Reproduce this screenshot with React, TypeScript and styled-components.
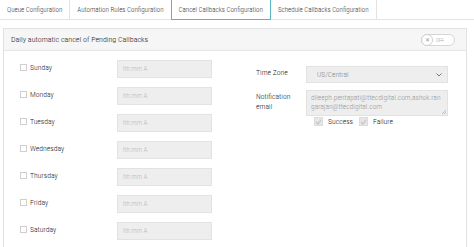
import React from "react";
import styled, { createGlobalStyle } from "styled-components";

const Global = createGlobalStyle`
  html, body { margin: 0; padding: 0; background: #fff; }
  body { font-family: "Roboto Condensed", "Liberation Sans", Arial, sans-serif; font-weight: 300; color: #333; }
  * { box-sizing: border-box; }
`;

const Page = styled.div`
  width: 474px;
  height: 247px;
  overflow: hidden;
`;

const TabBar = styled.div`
  display: flex;
  height: 20px;
  border-bottom: 1px solid #e3e3e3;
`;

const Tab = styled.div<{ $active?: boolean }>`
  display: flex;
  align-items: center;
  padding: 0 7px;
  height: 20px;
  font-size: 7px;
  color: #3a3a3a;
  white-space: nowrap;
  border-right: 1px solid #e3e3e3;
  border: ${(p) => (p.$active ? "1px solid #57b7c6" : undefined)};
  border-top: ${(p) => (p.$active ? "none" : undefined)};
  margin-left: ${(p) => (p.$active ? "-1px" : "0")};
`;

const Panel = styled.div`
  margin: 8px 7px 0 3px;
  border: 1px solid #e2e2e2;
  height: 230px;
`;

const PanelHeader = styled.div`
  display: flex;
  align-items: center;
  justify-content: space-between;
  height: 22px;
  padding: 0 11px 0 7px;
  background: #f6f6f6;
  border-bottom: 1px solid #e6e6e6;
  font-size: 8px;
  color: #222;
`;

const Toggle = styled.div`
  position: relative;
  width: 34px;
  height: 12px;
  border: 1px solid #d6d6d6;
  border-radius: 7px;
  background: #fff;
  display: flex;
  align-items: center;
  font-size: 5px;
  color: #999;
  padding-left: 14px;
`;

const Knob = styled.div`
  position: absolute;
  left: -1px;
  top: -1px;
  width: 12px;
  height: 12px;
  border-radius: 50%;
  border: 1px solid #cfcfcf;
  background: #fff;
  display: flex;
  align-items: center;
  justify-content: center;
  font-size: 6px;
  color: #999;
`;

const Body = styled.div`
  display: flex;
  padding: 9px 0 0 16px;
`;

const DaysColumn = styled.div`
  display: flex;
  flex-direction: column;
  gap: 9px;
  width: 236px;
`;

const DayRow = styled.div`
  display: flex;
  align-items: center;
  height: 18px;
`;

const DayLabel = styled.label`
  display: flex;
  align-items: center;
  gap: 3px;
  width: 97px;
  font-size: 7.7px;
  color: #222;
  margin-top: -4px;
`;

const Box = styled.span`
  width: 7px;
  height: 7px;
  border: 1px solid #cfcfcf;
  background: #fff;
  display: inline-block;
`;

const TimeInput = styled.div`
  width: 95px;
  height: 18px;
  background: #eeeeee;
  border: 1px solid #e2e2e2;
  display: flex;
  align-items: center;
  padding-left: 5px;
  font-size: 7px;
  color: #b8b8b8;
`;

const SettingsColumn = styled.div`
  display: grid;
  grid-template-columns: 50px 142px;
  row-gap: 7px;
  padding-top: 6px;
  align-content: start;
`;

const FieldLabel = styled.div`
  font-size: 7.7px;
  color: #222;
  line-height: 10px;
  padding-top: 2px;
`;

const Select = styled.div`
  height: 17px;
  background: #eeeeee;
  border: 1px solid #e2e2e2;
  display: flex;
  align-items: center;
  justify-content: space-between;
  padding: 0 5px 0 10px;
  font-size: 7.5px;
  color: #888;
`;

const Chevron = styled.svg`
  width: 6px;
  height: 4px;
`;

const TextArea = styled.div`
  position: relative;
  height: 26px;
  background: #eeeeee;
  border: 1px solid #e2e2e2;
  padding: 2px 4px;
  font-size: 7.5px;
  line-height: 9px;
  color: #999;
  word-break: break-all;
`;

const Grip = styled.svg`
  position: absolute;
  right: 1px;
  bottom: 1px;
  width: 5px;
  height: 5px;
`;

const ChecksRow = styled.div`
  grid-column: 2;
  display: flex;
  align-items: center;
  gap: 5px;
  margin-top: -6px;
  padding-left: 8px;
  font-size: 7.7px;
  color: #222;
`;

const CheckedBox = styled.span`
  width: 9px;
  height: 9px;
  background: #e6e6e6;
  border: 1px solid #dcdcdc;
  display: inline-flex;
  align-items: center;
  justify-content: center;
`;

const CheckItem = styled.span`
  display: flex;
  align-items: center;
  gap: 5px;
  margin-right: 1px;
`;

const days = ["Sunday", "Monday", "Tuesday", "Wednesday", "Thursday", "Friday", "Saturday"];

const Tick = () => (
  <svg width="7" height="6" viewBox="0 0 7 6">
    <path d="M1 3 L3 5 L6 1" fill="none" stroke="#c4c4c4" strokeWidth="1.2" />
  </svg>
);

export default function App() {
  return (
    <Page>
      <Global />
      <TabBar>
        <Tab>Queue Configuration</Tab>
        <Tab>Automation Rules Configuration</Tab>
        <Tab $active>Cancel Callbacks Configuration</Tab>
        <Tab>Schedule Callbacks Configuration</Tab>
      </TabBar>
      <Panel>
        <PanelHeader>
          <span>Daily automatic cancel of Pending Callbacks</span>
          <Toggle>
            <Knob>✕</Knob>
            OFF
          </Toggle>
        </PanelHeader>
        <Body>
          <DaysColumn>
            {days.map((d) => (
              <DayRow key={d}>
                <DayLabel>
                  <Box />
                  {d}
                </DayLabel>
                <TimeInput>hh:mm A</TimeInput>
              </DayRow>
            ))}
          </DaysColumn>
          <SettingsColumn>
            <FieldLabel>Time Zone</FieldLabel>
            <Select>
              US/Central
              <Chevron viewBox="0 0 6 4">
                <path d="M0.5 0.5 L3 3 L5.5 0.5" fill="none" stroke="#777" strokeWidth="1" />
              </Chevron>
            </Select>
            <FieldLabel>
              Notification
              <br />
              email
            </FieldLabel>
            <TextArea>
              dileeph.pentapati@ttecdigital.com,ashok.rangarajan@ttecdigital.com
              <Grip viewBox="0 0 5 5">
                <path d="M1 5 L5 1 M3 5 L5 3" stroke="#aaa" strokeWidth="0.7" />
              </Grip>
            </TextArea>
            <ChecksRow>
              <CheckItem>
                <CheckedBox>
                  <Tick />
                </CheckedBox>
                Success
              </CheckItem>
              <CheckItem>
                <CheckedBox>
                  <Tick />
                </CheckedBox>
                Failure
              </CheckItem>
            </ChecksRow>
          </SettingsColumn>
        </Body>
      </Panel>
    </Page>
  );
}
